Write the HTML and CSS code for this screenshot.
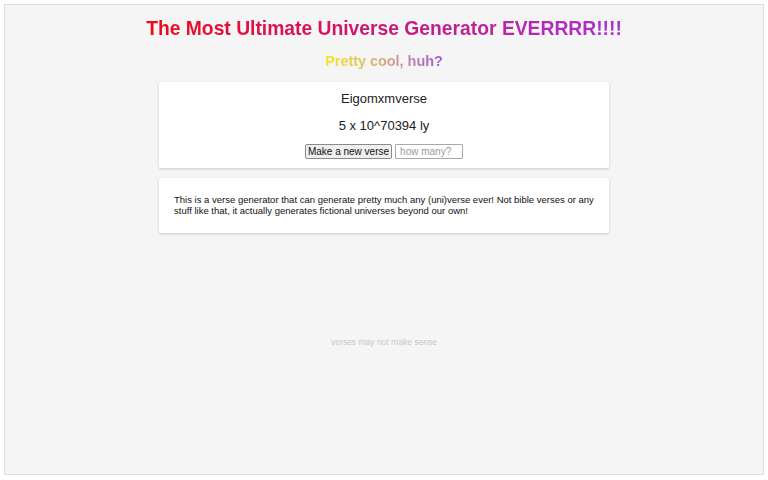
FILE: index.html
```html
<!DOCTYPE html>
<html lang="en">
<head>
<meta charset="utf-8">
<title>Universe Generator</title>
<link rel="stylesheet" href="styles.css">
</head>
<body>
<div class="page">
  <header class="head">
    <h1 class="title">The Most Ultimate Universe Generator EVERRRR!!!!</h1>
    <h2 class="subtitle">Pretty cool, huh?</h2>
  </header>
  <main class="cards">
    <section class="card generator">
      <div class="verse-name">Eigomxmverse</div>
      <div class="verse-size">5 x 10^70394 ly</div>
      <div class="controls">
        <button class="make-btn" type="button">Make a new verse</button>
        <input class="count" type="text" placeholder="how many?">
      </div>
    </section>
    <section class="card about">
      <p>This is a verse generator that can generate pretty much any (uni)verse ever! Not bible verses or any stuff like that, it actually generates fictional universes beyond our own!</p>
    </section>
  </main>
  <footer class="note">verses may not make sense</footer>
</div>
</body>
</html>
```
FILE: styles.css
```css
html, body {
  margin: 0;
  background: #ffffff;
}

body {
  padding: 4px;
  font-family: "Liberation Sans", Arial, sans-serif;
  color: #222;
}

.page {
  box-sizing: border-box;
  height: 471px;
  width: 760px;
  border: 1px solid #dcdcdc;
  background: #f5f5f5;
  display: flex;
  flex-direction: column;
  align-items: center;
}

.head {
  display: flex;
  flex-direction: column;
  align-items: center;
  padding-top: 13px;
}

.title {
  margin: 0;
  font-size: 19.3px;
  line-height: 22px;
  font-weight: bold;
  background: linear-gradient(to right, #f00a18, #c8187a 50%, #a834d4);
  -webkit-background-clip: text;
  background-clip: text;
  color: transparent;
}

.subtitle {
  margin: 13px 0 0;
  font-size: 14.4px;
  line-height: 17px;
  font-weight: bold;
  background: linear-gradient(to right, #f4e81a, #d8a884 50%, #a056dc);
  -webkit-background-clip: text;
  background-clip: text;
  color: transparent;
}

.cards {
  margin-top: 12px;
  display: flex;
  flex-direction: column;
  gap: 10px;
  width: 450px;
}

.card {
  background: #ffffff;
  border-radius: 2px;
  box-shadow: 0 1px 3px rgba(0, 0, 0, 0.18);
}

.generator {
  display: flex;
  flex-direction: column;
  align-items: center;
  padding: 9px 0 9px;
  font-size: 13px;
  color: #222;
}

.verse-name {
  line-height: 15px;
}

.verse-size {
  margin-top: 12px;
  line-height: 15px;
}

.controls {
  margin-top: 11px;
  display: flex;
  gap: 3px;
}

.make-btn {
  font-family: "Liberation Sans", Arial, sans-serif;
  font-size: 10px;
  height: 15px;
  padding: 0 2px;
  border: 1px solid #8a8a8a;
  border-radius: 2px;
  background: #efefef;
  color: #111;
}

.count {
  box-sizing: border-box;
  font-family: "Liberation Sans", Arial, sans-serif;
  font-size: 10px;
  width: 68px;
  height: 15px;
  padding: 0 4px;
  border: 1px solid #a8a8a8;
  border-radius: 1px;
  background: #fff;
}

.count::placeholder {
  color: #9a9a9a;
}

.about {
  padding: 16px 15px 17px;
}

.about p {
  margin: 0;
  font-size: 9.5px;
  line-height: 11px;
  color: #111;
}

.note {
  margin-top: 104px;
  font-size: 8.5px;
  color: #c8c8c8;
}
```
